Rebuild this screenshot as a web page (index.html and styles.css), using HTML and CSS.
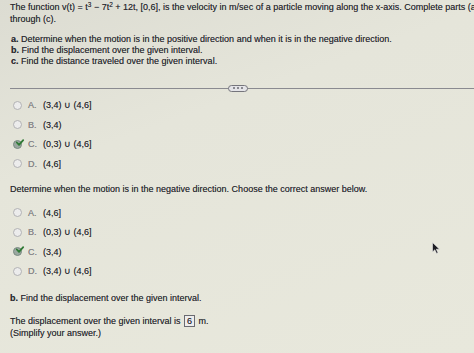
FILE: index.html
```html
<!DOCTYPE html>
<html>
<head>
<meta charset="utf-8">
<link rel="stylesheet" href="styles.css">
</head>
<body>
<div class="page">
  <p class="intro">The function v(t) = t<sup>3</sup> − 7t<sup>2</sup> + 12t, [0,6], is the velocity in m/sec of a particle moving along the x-axis. Complete parts (a)<br>through (c).</p>
  <ol class="parts">
    <li><b>a.</b> Determine when the motion is in the positive direction and when it is in the negative direction.</li>
    <li><b>b.</b> Find the displacement over the given interval.</li>
    <li><b>c.</b> Find the distance traveled over the given interval.</li>
  </ol>
  <div class="divider"><span class="pill"><i></i><i></i><i></i></span></div>

  <ul class="choices">
    <li><span class="radio"></span><span class="letter">A.</span><span>(3,4) ∪ (4,6]</span></li>
    <li><span class="radio"></span><span class="letter">B.</span><span>(3,4)</span></li>
    <li class="picked"><span class="radio"><svg class="check" viewBox="0 0 10 8"><path d="M1 4 L3.8 7 L9 1" /></svg></span><span class="letter">C.</span><span>(0,3) ∪ (4,6]</span></li>
    <li><span class="radio"></span><span class="letter">D.</span><span>(4,6]</span></li>
  </ul>

  <p class="question">Determine when the motion is in the negative direction. Choose the correct answer below.</p>

  <ul class="choices second">
    <li><span class="radio"></span><span class="letter">A.</span><span>(4,6]</span></li>
    <li><span class="radio"></span><span class="letter">B.</span><span>(0,3) ∪ (4,6]</span></li>
    <li class="picked"><span class="radio"><svg class="check" viewBox="0 0 10 8"><path d="M1 4 L3.8 7 L9 1" /></svg></span><span class="letter">C.</span><span>(3,4)</span></li>
    <li><span class="radio"></span><span class="letter">D.</span><span>(3,4) ∪ (4,6]</span></li>
  </ul>

  <p class="subhead"><b>b.</b> Find the displacement over the given interval.</p>
  <p class="answer">The displacement over the given interval is <span class="box">6</span> m.<br>(Simplify your answer.)</p>
</div>
<svg class="cursor" viewBox="0 0 8 12"><path d="M0.5 0.5 L0.5 10 L2.8 7.8 L4.6 11.5 L6 10.8 L4.3 7.2 L7.5 7.2 Z" /></svg>
</body>
</html>
```
FILE: styles.css
```css
html, body {
  margin: 0;
  padding: 0;
}
body {
  width: 474px;
  height: 353px;
  overflow: hidden;
  position: relative;
  background: linear-gradient(160deg, #dcdcd2 0%, #e5e5da 35%, #e8e8dc 100%);
  font-family: "Liberation Sans", Arial, sans-serif;
  font-size: 9px;
  color: #2c2c32;
  text-shadow: 0 0 0.5px rgba(40, 40, 46, 0.6);
}
.page {
  padding: 1px 0 0 10px;
}
p, ol, ul {
  margin: 0;
  padding: 0;
  list-style: none;
}
sup {
  font-size: 6.5px;
  line-height: 0;
  vertical-align: 3px;
}
.intro {
  line-height: 12px;
  white-space: nowrap;
}
.parts {
  margin-top: 8.5px;
  line-height: 11px;
  padding-left: 1px;
}
.divider {
  margin-top: 21px;
  height: 1px;
  background: #8a8a90;
  position: relative;
}
.pill {
  position: absolute;
  left: 218px;
  top: -3px;
  width: 18px;
  height: 5px;
  border: 1px solid #75757c;
  border-radius: 4px;
  background: #e4e4e8;
  display: flex;
  align-items: center;
  justify-content: center;
  gap: 2px;
}
.pill i {
  width: 2px;
  height: 2px;
  border-radius: 1px;
  background: #6c6c74;
}
.choices {
  margin-top: 7px;
  padding-left: 3px;
}
.choices li {
  height: 19.5px;
  display: flex;
  align-items: center;
}
.radio {
  width: 7px;
  height: 7px;
  border: 1px solid #b2b2b4;
  border-radius: 50%;
  background: #ececec;
  position: relative;
  flex: none;
}
.picked .radio {
  border-color: #7a8a82;
  background: #9aa8a0;
}
.check {
  position: absolute;
  left: 2px;
  top: -2px;
  width: 8px;
  height: 7px;
  overflow: visible;
}
.check path {
  fill: none;
  stroke: #2f7a35;
  stroke-width: 2.2;
  stroke-linecap: round;
  stroke-linejoin: round;
}
.letter {
  margin-left: 6px;
  width: 15px;
  color: #8c8c90;
}
.question {
  margin-top: 10px;
  line-height: 11px;
}
.second {
  margin-top: 8.5px;
}
.subhead {
  margin-top: 11.5px;
  line-height: 11px;
}
.answer {
  margin-top: 11px;
  line-height: 12px;
}
.box {
  display: inline-block;
  border: 1px solid #6a6a70;
  background: #ededed;
  padding: 0 2px;
  line-height: 10px;
  margin: 0 1px;
}
.cursor {
  position: absolute;
  left: 432px;
  top: 242px;
  width: 8px;
  height: 12px;
}
.cursor path {
  fill: #1c1c22;
  stroke: #ececec;
  stroke-width: 0.6;
}
```
